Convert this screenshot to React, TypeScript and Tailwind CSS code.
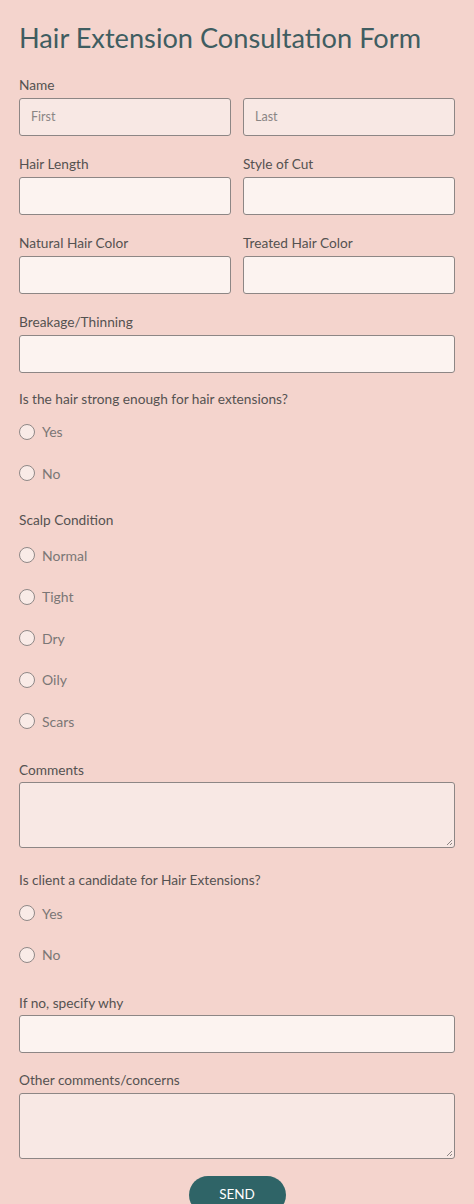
import React from "react";

const font = { fontFamily: 'Lato, "Noto Sans", sans-serif' };

function Label({ children, className = "" }: { children: React.ReactNode; className?: string }) {
  return (
    <div className={`h-[20px] leading-[20px] text-[13.7px] text-[#545251] ${className}`}>{children}</div>
  );
}

function Input({ placeholder, dark }: { placeholder?: string; dark?: boolean }) {
  return (
    <div
      className={`h-[38px] w-full rounded-[3px] border border-[#8d8685] ${dark ? "bg-[#f8e8e4]" : "bg-[#fcf3f0]"} flex items-center px-[11px] text-[12.5px] text-[#8a8584]`}
    >
      {placeholder}
    </div>
  );
}

function TextArea() {
  return (
    <div className="relative h-[66px] w-full rounded-[3px] border border-[#8d8685] bg-[#f8e8e4]">
      <svg className="absolute right-[1px] bottom-[1px]" width="8" height="8" viewBox="0 0 8 8">
        <path d="M7 2 L2 7 M7 5 L5 7" stroke="#8d8685" strokeWidth="1" />
      </svg>
    </div>
  );
}

function Radio({ label }: { label: string }) {
  return (
    <div className="h-[41.5px] flex items-center gap-[7px]">
      <div className="w-[16px] h-[16px] rounded-full border border-[#8f8887] bg-[#f9ebe7]" />
      <span className="text-[14px] text-[#7b7776]">{label}</span>
    </div>
  );
}

export default function App() {
  return (
    <div className="min-h-[1204px] bg-[#f4d4cd] px-[19px] pt-[20px] pb-[40px]" style={font}>
      <h1 className="h-[36px] leading-[36px] text-[27.2px] text-[#3f5d61]">Hair Extension Consultation Form</h1>

      <Label className="mt-[19px]">Name</Label>
      <div className="mt-[3px] grid grid-cols-2 gap-[12px]">
        <Input placeholder="First" dark />
        <Input placeholder="Last" dark />
      </div>

      <div className="mt-[18px] grid grid-cols-2 gap-[12px]">
        <div>
          <Label>Hair Length</Label>
          <div className="mt-[3px]"><Input /></div>
        </div>
        <div>
          <Label>Style of Cut</Label>
          <div className="mt-[3px]"><Input /></div>
        </div>
      </div>

      <div className="mt-[18px] grid grid-cols-2 gap-[12px]">
        <div>
          <Label>Natural Hair Color</Label>
          <div className="mt-[3px]"><Input /></div>
        </div>
        <div>
          <Label>Treated Hair Color</Label>
          <div className="mt-[3px]"><Input /></div>
        </div>
      </div>

      <Label className="mt-[18px]">Breakage/Thinning</Label>
      <div className="mt-[3px]"><Input /></div>

      <Label className="mt-[16px]">Is the hair strong enough for hair extensions?</Label>
      <div className="mt-[2px]">
        <Radio label="Yes" />
        <Radio label="No" />
      </div>

      <Label className="mt-[16px]">Scalp Condition</Label>
      <div className="mt-[4.5px]">
        <Radio label="Normal" />
        <Radio label="Tight" />
        <Radio label="Dry" />
        <Radio label="Oily" />
        <Radio label="Scars" />
      </div>

      <Label className="mt-[18px]">Comments</Label>
      <div className="mt-[2px]"><TextArea /></div>

      <Label className="mt-[22px]">Is client a candidate for Hair Extensions?</Label>
      <div className="mt-[2.5px]">
        <Radio label="Yes" />
        <Radio label="No" />
      </div>

      <Label className="mt-[17px]">If no, specify why</Label>
      <div className="mt-[2px]"><Input /></div>

      <Label className="mt-[17px]">Other comments/concerns</Label>
      <div className="mt-[3px]"><TextArea /></div>

      <div className="mt-[17px] flex justify-center">
        <button className="h-[38px] w-[97px] rounded-full bg-[#2f6467] text-white text-[13.5px]">SEND</button>
      </div>
    </div>
  );
}
